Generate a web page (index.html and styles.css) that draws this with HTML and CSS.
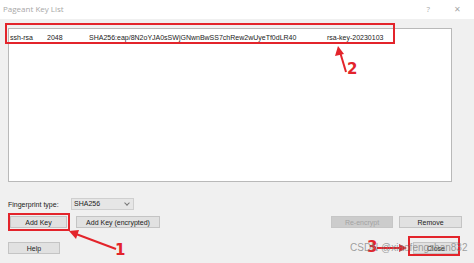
FILE: index.html
```html
<!DOCTYPE html>
<html lang="en">
<head>
  <meta charset="UTF-8">
  <title>Pageant Key List</title>
  <link rel="stylesheet" href="styles.css">
</head>
<body>
  <div class="window">
    <div class="titlebar">
      <span class="title">Pageant Key List</span>
      <span class="title-btns"><span class="help-q">?</span><span class="close-x">&#x2715;</span></span>
    </div>

    <div class="content">
      <div class="keylist">
        <div class="key-row">
          <span class="col-type">ssh-rsa</span>
          <span class="col-bits">2048</span>
          <span class="col-fp">SHA256:eap/8N2oYJA0sSWjGNwnBwSS7chRew2wUyeTf0dLR40</span>
          <span class="col-comment">rsa-key-20230103</span>
        </div>
      </div>

      <div class="fp-row">
        <span class="fp-label">Fingerprint type:</span>
        <div class="select">SHA256<span class="chev"></span></div>
      </div>

      <div class="btn-row">
        <button class="btn btn-add">Add Key</button>
        <button class="btn btn-enc">Add Key (encrypted)</button>
        <span class="spacer"></span>
        <button class="btn btn-reenc" disabled>Re-encrypt</button>
        <button class="btn btn-remove">Remove</button>
      </div>

      <div class="btn-row row2">
        <button class="btn btn-help">Help</button>
        <span class="spacer"></span>
        <button class="btn btn-close">Close</button>
      </div>
    </div>

    <!-- annotations drawn over the dialog -->
    <svg class="marks" width="474" height="263" viewBox="0 0 474 263">
      <rect x="6" y="24" width="388" height="19" fill="none" stroke="#e3242b" stroke-width="2"/>
      <rect x="9" y="214" width="60" height="16" fill="none" stroke="#e3242b" stroke-width="2"/>
      <rect x="409" y="237" width="50" height="18" fill="none" stroke="#e3242b" stroke-width="2"/>

      <line x1="346" y1="72" x2="340" y2="52" stroke="#e3242b" stroke-width="2"/>
      <polygon points="338,46 335,56 344,54" fill="#e3242b"/>

      <line x1="116" y1="249" x2="76" y2="234" stroke="#e3242b" stroke-width="2"/>
      <polygon points="69,231 76,239 79,230" fill="#e3242b"/>

      <line x1="377" y1="248" x2="400" y2="248" stroke="#e3242b" stroke-width="2"/>
      <polygon points="407,248 399,244 399,252" fill="#e3242b"/>
    </svg>
    <span class="num num1">1</span>
    <span class="num num2">2</span>
    <span class="num num3">3</span>
    <span class="watermark">CSDN @xiaofengzhan832</span>
  </div>
</body>
</html>
```

FILE: styles.css
```css
body {
  margin: 0;
  font-family: "Liberation Sans", Arial, sans-serif;
}

.window {
  position: relative;
  width: 474px;
  height: 263px;
  background: #f0f0f0;
  overflow: hidden;
}

.titlebar {
  height: 19px;
  background: #fff;
  display: flex;
  justify-content: space-between;
  align-items: center;
  padding: 0 13px 3px 3px;
  box-sizing: border-box;
  color: #a8a8a8;
  font-family: "Open Sans", sans-serif;
  font-size: 8px;
}

.title-btns {
  display: flex;
  gap: 24px;
  font-size: 8px;
}

.content {
  padding: 9px 12px 0 8px;
}

.keylist {
  width: 444px;
  height: 154px;
  box-sizing: border-box;
  background: #fff;
  border: 1px solid #b9b9b9;
}

.key-row {
  display: flex;
  height: 16px;
  align-items: center;
  font-size: 7px;
  color: #222;
  padding-left: 1px;
}

.col-type { width: 37px; }
.col-bits { width: 42px; }
.col-fp { width: 238px; }

.fp-row {
  display: flex;
  align-items: center;
  margin-top: 16px;
  height: 12px;
  font-size: 7px;
  color: #222;
}

.fp-label {
  width: 63px;
}

.select {
  position: relative;
  width: 63px;
  height: 12px;
  box-sizing: border-box;
  background: #e6e6e6;
  border: 1px solid #cfcfcf;
  padding-left: 2px;
  line-height: 10px;
}

.chev {
  position: absolute;
  right: 4px;
  top: 2px;
  width: 3px;
  height: 3px;
  border-right: 1px solid #777;
  border-bottom: 1px solid #777;
  transform: rotate(45deg);
}

.btn-row {
  display: flex;
  margin-top: 6px;
  height: 12px;
  padding-left: 2px;
}

.row2 {
  margin-top: 14px;
  padding-left: 0;
}

.spacer {
  flex: 1;
}

.btn {
  height: 12px;
  margin: 0;
  padding: 0;
  box-sizing: border-box;
  background: #e1e1e1;
  border: 1px solid #c4c4c4;
  font-family: "Liberation Sans", Arial, sans-serif;
  font-size: 7px;
  color: #222;
}

.btn-add { width: 57px; }
.btn-enc { width: 84px; margin-left: 9px; }
.btn-reenc { width: 62px; color: #a3a3a3; background: #cccccc; border-color: #c6c6c6; }
.btn-remove { width: 63px; margin-left: 6px; }
.btn-help { width: 52px; }
.btn-close { width: 46px; margin-right: 3px; }

.marks {
  position: absolute;
  left: 0;
  top: 0;
}

.num {
  position: absolute;
  color: #e3242b;
  font-family: "DejaVu Sans", sans-serif;
  font-weight: bold;
  font-size: 15px;
  line-height: 1;
}

.num1 { left: 115px; top: 243px; }
.num2 { left: 347px; top: 62px; }
.num3 { left: 367px; top: 240px; }

.watermark {
  position: absolute;
  left: 350px;
  top: 242px;
  font-size: 10px;
  color: rgba(120, 120, 120, 0.7);
  white-space: nowrap;
}
```
